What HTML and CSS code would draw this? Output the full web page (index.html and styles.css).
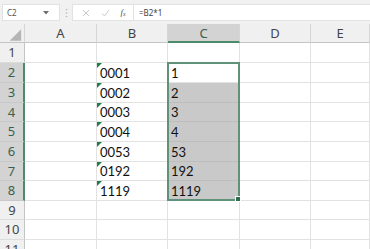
FILE: index.html
```html
<!DOCTYPE html>
<html>
<head>
<meta charset="utf-8">
<link rel="stylesheet" href="styles.css">
</head>
<body>
<div class="app">
  <div class="fbar">
    <div class="namebox">
      <span class="nb-text">C2</span>
      <svg class="nb-arrow" width="6" height="4" viewBox="0 0 6 4"><path d="M0 0H6L3 3.5Z" fill="#6d6d6d"/></svg>
    </div>
    <div class="grip">
      <svg width="3" height="10" viewBox="0 0 3 10"><circle cx="1.5" cy="1.5" r="0.8" fill="#b8b8b8"/><circle cx="1.5" cy="5" r="0.8" fill="#b8b8b8"/><circle cx="1.5" cy="8.5" r="0.8" fill="#b8b8b8"/></svg>
    </div>
    <div class="fbox">
      <div class="btns">
        <svg width="8" height="8" viewBox="0 0 8 8"><path d="M1 1L7 7M7 1L1 7" stroke="#c4c4c4" stroke-width="0.9" fill="none"/></svg>
        <svg width="9" height="8" viewBox="0 0 9 8"><path d="M1 4.5L3.5 7L8 1" stroke="#c4c4c4" stroke-width="0.9" fill="none"/></svg>
        <span class="fx">f<sub>x</sub></span>
      </div>
      <div class="formula">=B2*1</div>
    </div>
  </div>
  <div class="sheet">
    <div class="hd corner"><svg width="25" height="19" viewBox="0 0 25 19"><path d="M22 5V17H10Z" fill="#b5b5b5"/></svg></div>
    <div class="hd col">A</div>
    <div class="hd col">B</div>
    <div class="hd col sel">C</div>
    <div class="hd col">D</div>
    <div class="hd col">E</div>

    <div class="hd row">1</div><div class="c"></div><div class="c"></div><div class="c"></div><div class="c"></div><div class="c"></div>

    <div class="hd row sel">2</div><div class="c"></div><div class="c txt">0001</div><div class="c act">1<div class="selection"></div></div><div class="c"></div><div class="c"></div>
    <div class="hd row sel">3</div><div class="c"></div><div class="c txt">0002</div><div class="c hl">2</div><div class="c"></div><div class="c"></div>
    <div class="hd row sel">4</div><div class="c"></div><div class="c txt">0003</div><div class="c hl">3</div><div class="c"></div><div class="c"></div>
    <div class="hd row sel">5</div><div class="c"></div><div class="c txt">0004</div><div class="c hl">4</div><div class="c"></div><div class="c"></div>
    <div class="hd row sel">6</div><div class="c"></div><div class="c txt">0053</div><div class="c hl">53</div><div class="c"></div><div class="c"></div>
    <div class="hd row sel">7</div><div class="c"></div><div class="c txt">0192</div><div class="c hl">192</div><div class="c"></div><div class="c"></div>
    <div class="hd row sel">8</div><div class="c"></div><div class="c txt">1119</div><div class="c hl">1119</div><div class="c"></div><div class="c"></div>

    <div class="hd row">9</div><div class="c"></div><div class="c"></div><div class="c"></div><div class="c"></div><div class="c"></div>
    <div class="hd row">10</div><div class="c"></div><div class="c"></div><div class="c"></div><div class="c"></div><div class="c"></div>
    <div class="hd row">11</div><div class="c"></div><div class="c"></div><div class="c"></div><div class="c"></div><div class="c"></div>
  </div>
</div>
</body>
</html>
```

FILE: styles.css
```css
html, body {
  margin: 0;
  padding: 0;
  background: #ffffff;
  overflow: hidden;
}
.app {
  width: 370px;
  height: 249px;
  overflow: hidden;
  display: flex;
  flex-direction: column;
}
.fbar {
  height: 24px;
  flex: none;
  background: #f1f1f1;
  display: flex;
  align-items: flex-start;
  padding: 4px 0 0 2px;
  box-sizing: border-box;
}
.namebox {
  width: 58px;
  height: 17px;
  background: #ffffff;
  border: 1px solid #e2e2e2;
  box-sizing: border-box;
  display: flex;
  align-items: center;
  justify-content: space-between;
  padding: 0 10px 0 4px;
}
.nb-text {
  font-family: "Noto Sans", sans-serif;
  font-size: 8px;
  color: #555;
}
.grip {
  width: 12px;
  height: 17px;
  display: flex;
  align-items: center;
  justify-content: center;
}
.fbox {
  flex: 1;
  height: 17px;
  background: #ffffff;
  border: 1px solid #e2e2e2;
  border-right: none;
  box-sizing: border-box;
  display: flex;
  align-items: stretch;
}
.btns {
  width: 61px;
  display: flex;
  align-items: center;
  justify-content: space-around;
  padding: 0 2px 0 4px;
  box-sizing: border-box;
  border-right: 1px solid #e2e2e2;
}
.fx {
  font-family: "Liberation Serif", serif;
  font-style: italic;
  font-size: 9px;
  color: #555;
  line-height: 1;
}
.fx sub {
  font-size: 6px;
  vertical-align: -1px;
}
.formula {
  font-family: "Noto Sans", sans-serif;
  font-size: 8px;
  color: #444;
  display: flex;
  align-items: center;
  padding-left: 5px;
}
.sheet {
  flex: 1;
  display: grid;
  grid-template-columns: 25px 72px 71px 72px 71px 1fr;
  grid-template-rows: 19px 20px 20px 20px 19px 20px 20px 19px 20px 19px 20px 20px;
  background: #ffffff;
}
.hd {
  background: #f0f0f0;
  box-sizing: border-box;
  border-right: 1px solid #d6d6d6;
  border-bottom: 1px solid #d6d6d6;
  font-family: "Noto Sans", sans-serif;
  font-size: 13px;
  color: #454545;
  display: flex;
  align-items: center;
  justify-content: center;
  line-height: 1;
}
.hd.col {
  border-bottom: 1px solid #c4c4c4;
  padding-top: 1px;
}
.hd.corner {
  border-bottom: 1px solid #c4c4c4;
  align-items: stretch;
  justify-content: stretch;
}
.hd.col.sel {
  background: #d3d3d3;
  border-bottom: 2px solid #4d8a6b;
  color: #3b5f4c;
  padding-top: 2px;
}
.hd.row {
  border-right: 1px solid #c4c4c4;
  border-bottom: 1px solid #dcdcdc;
}
.hd.row.sel {
  background: #d3d3d3;
  border-right: 2px solid #4d8a6b;
  border-bottom: 1px solid #c8c8c8;
  color: #3b5f4c;
}
.c {
  position: relative;
  box-sizing: border-box;
  border-right: 1px solid #e2e2e2;
  border-bottom: 1px solid #e2e2e2;
  font-family: Lato, sans-serif;
  font-size: 13px;
  color: #111;
  display: flex;
  align-items: flex-end;
  padding: 0 3px 2px;
  line-height: 1;
}
.c.hl {
  background: #c9c9c9;
  border-right-color: #c9c9c9;
  border-bottom-color: #bdbdbd;
}
.c.txt::before {
  content: "";
  position: absolute;
  left: 0;
  top: 0;
  border-top: 5px solid #1f7d45;
  border-right: 5px solid transparent;
}
.selection {
  position: absolute;
  left: -1px;
  top: -1px;
  width: 73px;
  height: 139px;
  box-sizing: border-box;
  border: 2px solid #5f9279;
  z-index: 2;
  pointer-events: none;
}
.selection::after {
  content: "";
  position: absolute;
  right: -3px;
  bottom: -3px;
  width: 4px;
  height: 4px;
  background: #2e6d4f;
  border: 1px solid #ffffff;
}
```
